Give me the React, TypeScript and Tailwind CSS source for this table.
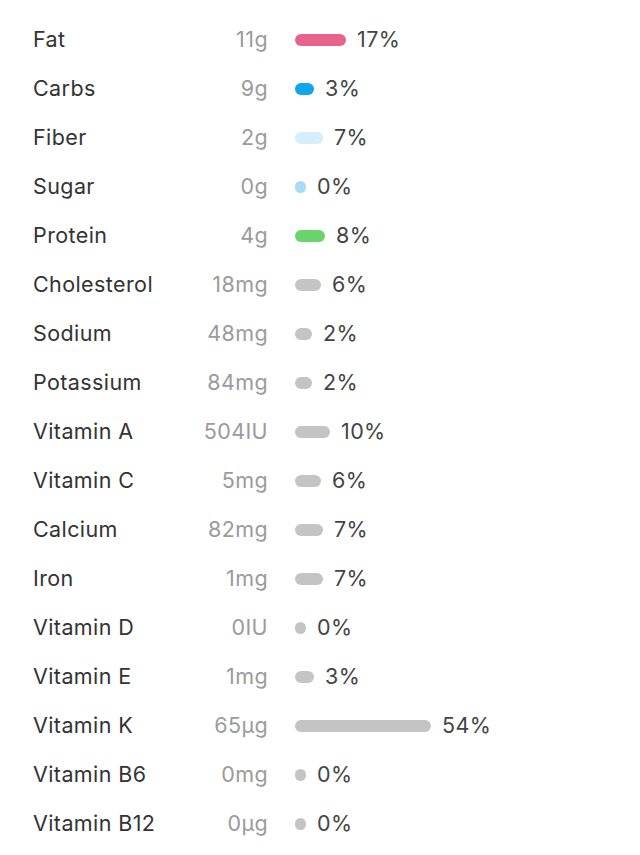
const nutrients = [
  { name: "Fat", amount: "11g", pct: 17, color: "bg-[#e8628c]" },
  { name: "Carbs", amount: "9g", pct: 3, color: "bg-[#0fa6ec]" },
  { name: "Fiber", amount: "2g", pct: 7, color: "bg-[#d5eefb]" },
  { name: "Sugar", amount: "0g", pct: 0, color: "bg-[#a9dcf4]" },
  { name: "Protein", amount: "4g", pct: 8, color: "bg-[#6bd36b]" },
  { name: "Cholesterol", amount: "18mg", pct: 6, color: "bg-[#c4c4c4]" },
  { name: "Sodium", amount: "48mg", pct: 2, color: "bg-[#c4c4c4]" },
  { name: "Potassium", amount: "84mg", pct: 2, color: "bg-[#c4c4c4]" },
  { name: "Vitamin A", amount: "504IU", pct: 10, color: "bg-[#c4c4c4]" },
  { name: "Vitamin C", amount: "5mg", pct: 6, color: "bg-[#c4c4c4]" },
  { name: "Calcium", amount: "82mg", pct: 7, color: "bg-[#c4c4c4]" },
  { name: "Iron", amount: "1mg", pct: 7, color: "bg-[#c4c4c4]" },
  { name: "Vitamin D", amount: "0IU", pct: 0, color: "bg-[#c4c4c4]" },
  { name: "Vitamin E", amount: "1mg", pct: 3, color: "bg-[#c4c4c4]" },
  { name: "Vitamin K", amount: "65µg", pct: 54, color: "bg-[#c4c4c4]" },
  { name: "Vitamin B6", amount: "0mg", pct: 0, color: "bg-[#c4c4c4]" },
  { name: "Vitamin B12", amount: "0µg", pct: 0, color: "bg-[#c4c4c4]" },
]

export default function App() {
  return (
    <div className="min-h-[855px] bg-white pt-[15px] font-['Inter','Liberation_Sans',sans-serif] text-[21.5px] tracking-[0.4px]">
      {nutrients.map((n) => (
        <div key={n.name} className="flex h-[49px] items-center pl-[33px]">
          <span className="w-[150px] text-[#333333]">{n.name}</span>
          <span className="w-[85px] text-right text-[#9b9b9b]">{n.amount}</span>
          <div className="ml-[27px] flex items-center">
            <div
              className={`h-[12px] rounded-full ${n.color}`}
              style={{ width: n.pct === 0 ? 11 : Math.round(12 + n.pct * 2.3) }}
            />
            <span className="ml-[11px] text-[#444444]">{n.pct}%</span>
          </div>
        </div>
      ))}
    </div>
  )
}
